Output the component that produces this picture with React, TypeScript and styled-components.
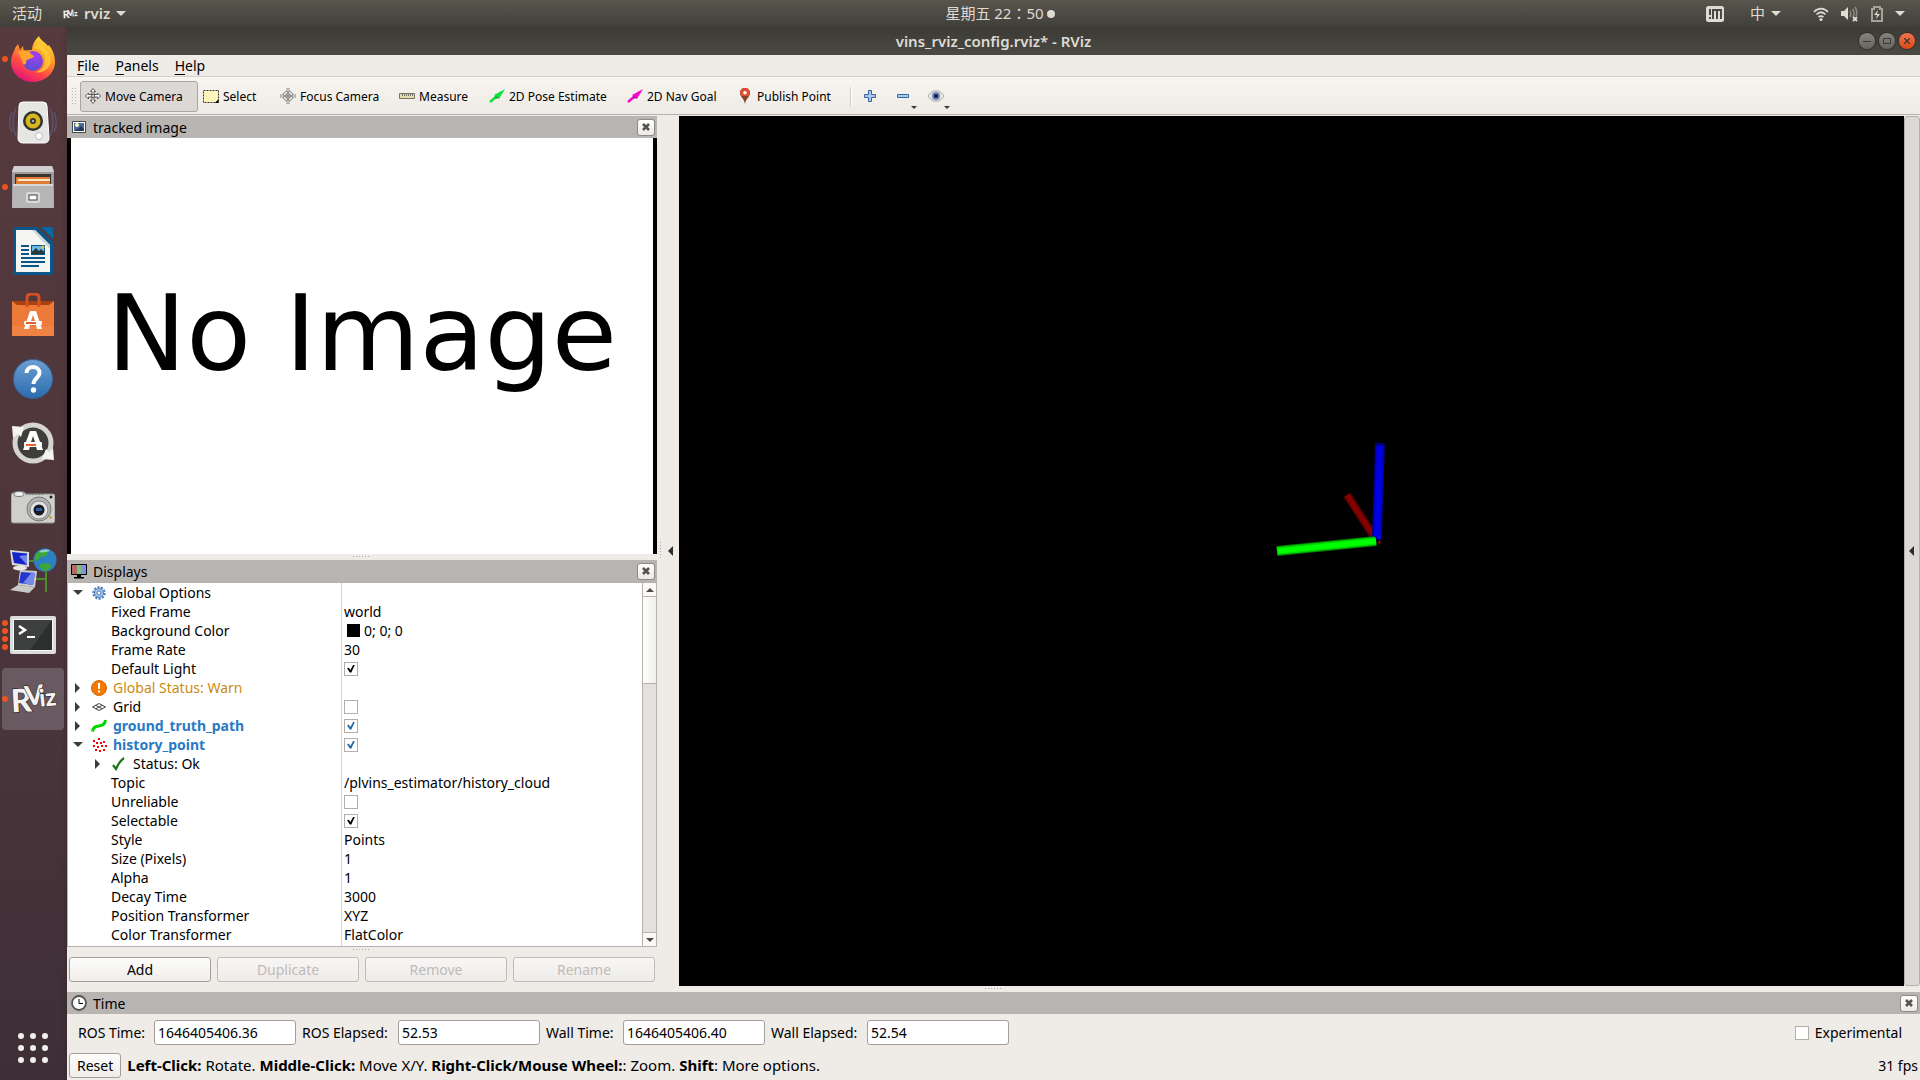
import React from "react";
import styled, { createGlobalStyle, css } from "styled-components";

const GlobalStyle = createGlobalStyle`
  *, *::before, *::after { box-sizing: border-box; }
  html, body, #root { height: 100%; margin: 0; }
  body {
    background: #efebe7;
    color: #000;
    font: 14px/19px "Noto Sans", "Noto Sans CJK SC", sans-serif;
    overflow: hidden;
  }
  button, input { font: inherit; color: inherit; margin: 0; }
  svg { display: block; flex: none; }
`;

/* ---------- desktop shell ---------- */

const Desktop = styled.div`
  display: flex;
  flex-direction: column;
  height: 100vh;
`;

const TopBar = styled.header`
  display: grid;
  grid-template-columns: 1fr auto 1fr;
  flex: none;
  height: 27px;
  align-items: center;
  background: linear-gradient(#58554d, #413f3a);
  color: #dfdbd2;
  font-size: 15px;
`;

const BarGroup = styled.div<{ $end?: boolean }>`
  display: flex;
  align-items: center;
  height: 27px;
  ${(p) =>
    p.$end
      ? css`
          justify-content: flex-end;
          padding-right: 15px;
        `
      : css`
          padding-left: 12px;
          gap: 20px;
        `}
`;

const BarButton = styled.button<{ $bold?: boolean; $after?: number }>`
  display: flex;
  align-items: center;
  gap: 6px;
  padding: 0;
  margin-right: ${(p) => p.$after || 0}px;
  border: 0;
  background: none;
  color: #dfdbd2;
  font-weight: ${(p) => (p.$bold ? 600 : 400)};
`;

const Clock = styled(BarButton)`
  margin-left: 80px;
  gap: 3px;
  font-family: "Noto Sans", "Noto Sans CJK TC", sans-serif;
`;

const Dot = styled.span`
  width: 8px;
  height: 8px;
  border-radius: 50%;
  background: #dfdbd2;
`;

const Below = styled.div`
  display: flex;
  flex: 1;
  min-height: 0;
`;

const Dock = styled.nav`
  display: flex;
  flex-direction: column;
  flex: none;
  width: 67px;
  background: linear-gradient(90deg, transparent 90%, rgba(0, 0, 0, 0.08)),
    linear-gradient(#573a3d, #4d363c 50%, #3e2f37);
`;

const DockItem = styled.button<{ $active?: boolean; $last?: boolean }>`
  position: relative;
  display: grid;
  place-items: center;
  width: 62px;
  height: 62px;
  margin: ${(p) => (p.$last ? "auto 2px 1px" : "1px 2px")};
  padding: 0;
  border: 0;
  border-radius: 4px;
  background: ${(p) => (p.$active ? "#685a60" : "none")};
`;

const Running = styled.span`
  position: absolute;
  left: 0;
  top: 0;
  bottom: 0;
  display: flex;
  flex-direction: column;
  justify-content: center;
  gap: 2px;
  i {
    width: 6px;
    height: 6px;
    border-radius: 50%;
    background: #e95420;
  }
`;

/* ---------- application window ---------- */

const Window = styled.main`
  display: flex;
  flex-direction: column;
  flex: 1;
  min-width: 0;
  background: #efebe7;
`;

const TitleBar = styled.div`
  position: relative;
  display: flex;
  flex: none;
  align-items: center;
  justify-content: center;
  height: 28px;
  background: linear-gradient(#3b3a36, #4b4944);
  color: #dfdbd2;
  font-size: 15px;
  font-weight: 600;
`;

const WindowButtons = styled.div`
  position: absolute;
  right: 5px;
  top: 6px;
  display: flex;
  gap: 4px;
`;

const WindowButton = styled.button<{ $close?: boolean }>`
  display: grid;
  place-items: center;
  width: 16px;
  height: 16px;
  padding: 0;
  border: 0;
  border-radius: 50%;
  color: #3a3935;
  background: ${(p) => (p.$close ? "linear-gradient(#f4764d, #dd4814)" : "linear-gradient(#85837c, #66645e)")};
  box-shadow: 0 0 1px 1px rgba(30, 28, 26, 0.5);
`;

const MenuBar = styled.nav`
  display: flex;
  flex: none;
  height: 22px;
  padding-left: 2px;
  border-bottom: 1px solid #d4d0cb;
`;

const MenuButton = styled.button`
  padding: 0 8px;
  border: 0;
  background: none;
  line-height: 21px;
  u {
    text-underline-offset: 3px;
  }
`;

const Toolbar = styled.div`
  display: flex;
  flex: none;
  align-items: center;
  height: 38px;
  padding: 1px 0 0 4px;
  border-bottom: 1px solid #b6b2ad;
  background: linear-gradient(#f8f5f0, #eeebe6);
`;

const Grip = styled.span`
  width: 5px;
  height: 18px;
  margin-right: 4px;
  background: radial-gradient(circle, #b9b5b0 1px, transparent 1px) 0 0 / 3px 3px;
`;

const ToolButton = styled.button<{ $width: number; $active?: boolean }>`
  display: flex;
  align-items: center;
  gap: 4px;
  width: ${(p) => p.$width}px;
  height: 31px;
  padding: 0 0 0 4px;
  border: 1px solid ${(p) => (p.$active ? "#a9a5a1" : "transparent")};
  border-radius: 3px;
  background: ${(p) => (p.$active ? "#dcd8d5" : "none")};
  font-size: 12px;
  white-space: nowrap;
`;

const Separator = styled.span`
  width: 2px;
  height: 19px;
  margin-right: 8px;
  border-left: 1px solid #ccc8c3;
  border-right: 1px solid #fff;
`;

const IconTool = styled.button`
  position: relative;
  display: grid;
  place-items: center;
  width: 33px;
  height: 31px;
  padding: 0 13px 0 0;
  border: 0;
  background: none;
`;

const DropMark = styled.span`
  position: absolute;
  right: 9px;
  bottom: 3px;
  border: 3px solid transparent;
  border-top-color: #3c3b37;
  border-bottom: 0;
`;

const Workspace = styled.div`
  display: flex;
  flex: 1;
  min-height: 0;
  padding-top: 1px;
`;

const Side = styled.section`
  display: flex;
  flex-direction: column;
  flex: none;
  width: 590px;
`;

const PanelHeader = styled.div`
  display: flex;
  align-items: center;
  flex: none;
  height: 22px;
  padding: 0 2px 0 4px;
  gap: 6px;
  background: #b8b4b1;
  h2 {
    flex: 1;
    margin: 0;
    font-size: 14px;
    font-weight: 400;
  }
`;

const CloseButton = styled.button`
  display: grid;
  place-items: center;
  width: 18px;
  height: 17px;
  padding: 0;
  border: 1px solid #8d8985;
  border-radius: 3px;
  background: linear-gradient(#fff, #eceae7);
`;

const ImagePane = styled.div`
  display: grid;
  place-items: center;
  flex: 1;
  min-height: 0;
  padding-bottom: 24px;
  border: solid #000;
  border-width: 0 4px;
  background: #fff;
  font: 106px/120px "DejaVu Sans", sans-serif;
  white-space: nowrap;
  overflow: hidden;
`;

const Splitter = styled.div<{ $height: number }>`
  flex: none;
  height: ${(p) => p.$height}px;
  &::before {
    content: "";
    display: block;
    width: 18px;
    height: 1px;
    margin: 2px auto 0;
    background: repeating-linear-gradient(90deg, #aaa6a1 0 1px, transparent 1px 3px);
  }
`;

const TreeFrame = styled.div`
  display: flex;
  flex: none;
  height: 365px;
  border: 1px solid #b6b1ac;
`;

const Tree = styled.table`
  flex: 1;
  align-self: flex-start;
  table-layout: fixed;
  border-collapse: separate;
  border-spacing: 0;
`;

const TreeArea = styled.div`
  display: flex;
  flex: 1;
  background: linear-gradient(90deg, #fff 273px, #d5d2cf 273px 274px, #fff 274px);
`;

const NameCell = styled.th`
  width: 273px;
  height: 19px;
  padding: 0;
  font-weight: 400;
  text-align: left;
`;

const ValueCell = styled.td`
  height: 19px;
  padding: 0 0 0 3px;
`;

const Line = styled.div<{ $indent?: number; $tone?: "warn" | "link" }>`
  display: flex;
  align-items: center;
  height: 19px;
  padding-left: ${(p) => p.$indent || 0}px;
  color: ${(p) => (p.$tone === "warn" ? "#c88c14" : p.$tone === "link" ? "#2a79c4" : "#000")};
  font-weight: ${(p) => (p.$tone === "link" ? 700 : 400)};
`;

const Expander = styled.button<{ $open?: boolean }>`
  display: grid;
  place-items: center;
  width: 19px;
  height: 19px;
  padding: 0;
  border: 0;
  background: none;
  &::before {
    content: "";
    border: 5px solid transparent;
    ${(p) =>
      p.$open
        ? css`
            border-top-color: #3c3b37;
            border-bottom: 0;
          `
        : css`
            border-left-color: #3c3b37;
            border-right: 0;
          `}
  }
`;

const IconSlot = styled.span`
  margin: 0 6px 0 4px;
`;

const Check = styled.input.attrs({ type: "checkbox" })<{ $blue?: boolean }>`
  appearance: none;
  display: block;
  flex: none;
  width: 14px;
  height: 14px;
  border: 1px solid #b3aeaa;
  background: #fff;
  &:checked::before {
    content: "";
    display: block;
    width: 8px;
    height: 8px;
    margin: 2px;
    background: ${(p) => (p.$blue ? "#1d63a8" : "#000")};
    clip-path: polygon(0 45%, 22% 40%, 42% 68%, 80% 0, 100% 0, 54% 100%, 34% 100%);
  }
`;

const Swatch = styled.span`
  width: 13px;
  height: 13px;
  margin: 0 4px 0 3px;
  background: #000;
`;

const ScrollBar = styled.div`
  display: flex;
  flex-direction: column;
  width: 14px;
  border-left: 1px solid #b6b1ac;
  background: #e3e1de;
`;

const ScrollStep = styled.button<{ $down?: boolean }>`
  display: grid;
  place-items: center;
  height: 14px;
  padding: 0;
  border: solid #b6b1ac;
  border-width: ${(p) => (p.$down ? "1px 0 0" : "0 0 1px")};
  margin-top: ${(p) => (p.$down ? "auto" : 0)};
  background: #faf9f8;
  &::before {
    content: "";
    border: 4px solid transparent;
    ${(p) => (p.$down ? "border-top-color: #4b4a46; border-bottom: 0;" : "border-bottom-color: #4b4a46; border-top: 0;")}
  }
`;

const Thumb = styled.div`
  height: 87px;
  border-bottom: 1px solid #b6b1ac;
  background: linear-gradient(90deg, #fff, #f1efed);
`;

const ButtonRow = styled.div`
  display: grid;
  grid-template-columns: repeat(4, 1fr);
  gap: 6px;
  padding: 0 2px 4px;
`;

const PushButton = styled.button`
  height: 25px;
  padding: 0 7px;
  border: 1px solid #a39f9b;
  border-radius: 3px;
  background: linear-gradient(#fdfdfc, #efedea);
  line-height: 21px;
  &:disabled {
    border-color: #bfbbb7;
    color: #bfbbb8;
    background: linear-gradient(#f8f7f5, #eeebe8);
  }
`;

const SideHandle = styled.button<{ $wide?: boolean }>`
  display: flex;
  align-items: center;
  flex: none;
  gap: 7px;
  width: ${(p) => (p.$wide ? 22 : 16)}px;
  padding: 0 0 0 ${(p) => (p.$wide ? 3 : 4)}px;
  border: ${(p) => (p.$wide ? 0 : "1px solid #b3afab")};
  border-radius: ${(p) => (p.$wide ? 0 : 3)}px;
  background: ${(p) => (p.$wide ? "none" : "#dcd8d5")};
`;

const VerticalDots = styled.span`
  width: 1px;
  height: 18px;
  background: repeating-linear-gradient(#aaa6a1 0 1px, transparent 1px 3px);
`;

const LeftMark = styled.span`
  border: 5px solid transparent;
  border-right-color: #2f2e2b;
  border-left: 0;
`;

const View = styled.div`
  flex: 1;
  min-width: 0;
  background: #000;
  svg {
    width: 100%;
    height: 100%;
  }
`;

const TimeForm = styled.form`
  display: flex;
  align-items: center;
  flex: none;
  height: 37px;
  padding: 0 18px 0 11px;
`;

const TimeLabel = styled.label<{ $width: number }>`
  width: ${(p) => p.$width}px;
  white-space: nowrap;
`;

const TimeInput = styled.input`
  width: 142px;
  height: 25px;
  margin-right: 6px;
  padding: 0 3px;
  border: 1px solid #a39f9b;
  border-radius: 3px;
  background: #fff;
  line-height: 21px;
`;

const Experimental = styled.label`
  display: flex;
  align-items: center;
  gap: 6px;
  margin-left: auto;
`;

const StatusBar = styled.footer`
  display: flex;
  flex: none;
  align-items: center;
  height: 29px;
  padding: 0 2px;
  gap: 6px;
  p {
    flex: 1;
    margin: 0;
    font-size: 15px;
  }
`;

/* ---------- icons ---------- */

const DownTri = () => (
  <svg width="10" height="5" viewBox="0 0 10 5"><path d="M0 0h10L5 5z" fill="#dfdbd2" /></svg>
);

const RvizMark = ({ small }: { small?: boolean }) => (
  <svg width={small ? 16 : 50} height={small ? 16 : 50} viewBox="-1 -8 50 50" overflow="visible" fontFamily="Lato, sans-serif" fontWeight="900" fill="#f4f3f1">
    <g stroke={small ? "none" : "#2b2426"} strokeWidth="1.200" paintOrder="stroke">
      <text x="2" y="30" fontSize="32" transform="rotate(-3 10 20)">R</text>
      <text x="16" y="23" fontSize="27" transform="rotate(-6 24 16)">V</text>
      <text x="30" y="24" fontSize="24" transform="rotate(-6 38 16)">iz</text>
    </g>
  </svg>
);

const FirefoxIcon = () => (
  <svg width="46" height="48" viewBox="0 0 46 48">
    <defs>
      <linearGradient id="ff1" x1=".8" y1="0" x2=".3" y2="1">
        <stop offset="0" stopColor="#ffe73a" /><stop offset=".4" stopColor="#ff9a26" /><stop offset=".7" stopColor="#ff4a45" /><stop offset="1" stopColor="#e3107c" />
      </linearGradient>
      <radialGradient id="ff2" cx=".6" cy=".2" r=".8"><stop offset="0" stopColor="#a43df0" /><stop offset="1" stopColor="#5b4fd0" /></radialGradient>
    </defs>
    <path d="M8 9l2 6 3-4 1 6c3-2 5-2 8-2C22 8 27 3 29 1c1 4 6 6 9 10l1-1c4 5 6 11 6 17 0 11-10 20-22 20S1 38 1 27C1 20 5 15 5 13z" fill="url(#ff1)" />
    <circle cx="23" cy="26" r="10" fill="url(#ff2)" />
    <path d="M8 17c5-3 11-2 13 2l3 2c-1 3-6 2-8 5 1 3-1 4-3 3-1-5-3-8-5-12z" fill="#ffa52c" />
    <path d="M24 14c6-1 11 4 11 11 0 6-4 11-10 12 8 2 15-4 16-11 0-8-7-13-12-18-2 2-4 4-5 6z" fill="#ffd034" opacity=".8" />
  </svg>
);

const SpeakerIcon = () => (
  <svg width="50" height="46" viewBox="0 0 50 46">
    <g fill="none" stroke="#5d6f9e" strokeWidth="1.500" opacity=".5">
      <path d="M8 8c-4 9-4 20 0 28M4 12c-3 7-3 14 0 20M42 8c4 9 4 20 0 28M46 12c3 7 3 14 0 20" />
    </g>
    <path d="M15 2h20q4 0 4 4l2 32q0 5-5 5H15q-5 0-5-5l1-32q0-4 4-4z" fill="#e6e6e4" stroke="#fff" />
    <circle cx="25" cy="21" r="10" fill="#33332c" /><circle cx="25" cy="21" r="7.500" fill="#d6b720" /><circle cx="25" cy="21" r="3" fill="#33332c" /><circle cx="25" cy="21" r="1.300" fill="#aaa" />
    <circle cx="31" cy="36" r="3.500" fill="#fff" stroke="#bbb" />
  </svg>
);

const FilesIcon = () => (
  <svg width="44" height="46" viewBox="0 0 44 46">
    <path d="M3 2h38l2 5v35H1V7z" fill="#9c9c9c" /><path d="M3 2h38l2 6H1z" fill="#cfcfcf" />
    <path d="M4 10h36v10H4z" fill="#3a322c" /><path d="M5 13h34v8H5z" fill="#e07b33" /><path d="M7 15h32v2H7z" fill="#fde7c6" />
    <path d="M2 20h40l1 24H1z" fill="#b6b6b6" /><path d="M2 20h40v2H2z" fill="#d8d8d8" />
    <rect x="15" y="28" width="14" height="11" rx="2" fill="#d9d9d9" /><rect x="18" y="31" width="8" height="5" fill="#fff" stroke="#444" />
  </svg>
);

const WriterIcon = () => (
  <svg width="40" height="48" viewBox="0 0 40 48">
    <path d="M2 0h22l16 15v31q0 2-2 2H2q-2 0-2-2V2q0-2 2-2z" fill="#0b5688" /><path d="M28 0h10q2 0 2 2v10z" fill="#0369a3" />
    <path d="M3 3h19l15 15v27H3z" fill="#f5f5f4" /><path d="M22 3l15 15V22L19 3z" fill="#cfd4d6" />
    <g fill="#0b5688"><path d="M8 18h8v2H8zM8 22h8v2H8zM8 26h8v2H8zM8 30h24v2H8zM8 34h24v2H8zM8 38h18v2H8z" /><path d="M18 18h14v10H18z" /></g>
    <path d="M19 19h12v5H19z" fill="#6db9e2" /><path d="M19 27v-2l4-4 3 3 2-2 3 3v2z" fill="#263a3a" /><circle cx="30" cy="20" r="1.500" fill="#f4ca38" />
  </svg>
);

const SoftwareIcon = () => (
  <svg width="42" height="44" viewBox="0 0 42 44">
    <path d="M0 8h42l-2 5H2z" fill="#a8410f" /><path d="M0 8l5 4h32l5-4v35H0z" fill="#ee7a3a" /><path d="M0 33h42v10H0z" fill="#f08344" />
    <path d="M15 14V5q0-4 4-4h4q4 0 4 4v9" fill="none" stroke="#d5501d" strokeWidth="3" />
    <path d="M18 18h6l6 18h-5l-1-4h-6l-1 4h-5zM21 22l-2 6h4z" fill="#fff" fillRule="evenodd" /><rect x="12" y="28" width="18" height="4" rx="1" fill="#fff" /><path d="M14 29h10v2H14z" fill="#e9602a" />
  </svg>
);

const HelpIcon = () => (
  <svg width="40" height="42" viewBox="0 0 40 42">
    <defs><linearGradient id="hp" x2="0" y2="1"><stop stopColor="#6d9fd3" /><stop offset="1" stopColor="#2a6cae" /></linearGradient></defs>
    <circle cx="20" cy="21" r="19.500" fill="url(#hp)" stroke="#31639b" />
    <path d="M13.500 15c0-8 13-8 13 0 0 5-6 5-6 11" fill="none" stroke="#fff" strokeWidth="4" /><circle cx="20.500" cy="32" r="2.700" fill="#fff" />
  </svg>
);

const UpdaterIcon = () => (
  <svg width="44" height="44" viewBox="0 0 44 44">
    <circle cx="22" cy="22" r="18" fill="#3f3e3a" stroke="#d6d4d2" strokeWidth="5" />
    <path d="M1 5l12 1-3 10-3-3-5 4zM43 39l-12-1 4-10 3 3 4-4z" fill="#f4f4f4" />
    <path d="M19 10h6l7 19h-6l-1-4h-6l-1 4h-6zM22 15l-2 6h4z" fill="#fff" fillRule="evenodd" /><rect x="13" y="21" width="18" height="5" rx="1" fill="#fff" /><path d="M15 23h10v2H15z" fill="#e9602a" />
  </svg>
);

const CameraIcon = () => (
  <svg width="44" height="34" viewBox="0 0 44 34">
    <path d="M5 2h8l2 2h27q2 0 2 2v24q0 3-2 3H2q-2 0-2-3V5q0-2 5-3z" fill="#cfcfcd" stroke="#8e8e8c" />
    <ellipse cx="8" cy="4" rx="5" ry="2.500" fill="#eee" stroke="#777" /><path d="M15 4h18" stroke="#666" strokeDasharray="2 1" />
    <circle cx="28" cy="19" r="12" fill="#b3b3b1" stroke="#777" /><circle cx="28" cy="20" r="9" fill="#e3e3e3" stroke="#888" /><circle cx="28" cy="20" r="5.500" fill="#161a22" /><path d="M25 18h6v3h-6z" fill="#2c5ea8" />
    <circle cx="40" cy="7" r="1.500" fill="#222" /><path d="M38 26h3v3h-3z" fill="#e9a13a" />
  </svg>
);

const NetworkIcon = () => (
  <svg width="48" height="46" viewBox="0 0 48 46">
    <path d="M19 13h8M37 24v20M26 31h11" stroke="#4caa26" strokeWidth="1.500" fill="none" />
    <path d="M1 2l19 2v15L3 17z" fill="#d9d9d6" /><path d="M3 4l15 1.500V17L5 15z" fill="#1424c8" /><path d="M10 8l8-1v10z" fill="#7486ea" />
    <ellipse cx="11" cy="20" rx="7" ry="2.500" fill="#e8e8e5" />
    <path d="M11 22l17 1-2 16-17-2z" fill="#d0d0cd" /><path d="M12 24l14 1-2 12-14-2z" fill="#2236d0" /><path d="M14 35l9-11 3 1-2 12z" fill="#7689ea" /><path d="M1 42l8-5 17 2-6 6z" fill="#c9c9c6" />
    <circle cx="36" cy="12" r="11.500" fill="#2d7fc4" /><path d="M28 5c4-4 9-4 12-2l-3 5-5 1-4 4-3-2zM31 16l8-1 4 3-5 5c-4 1-8-3-7-7z" fill="#3fa63c" /><path d="M30 4c4-3 8-3 11-1-4 1-7 2-11 1z" fill="#bfe3f6" opacity=".7" />
  </svg>
);

const TerminalIcon = () => (
  <svg width="46" height="38" viewBox="0 0 46 38">
    <rect width="46" height="38" rx="2" fill="#dcdcda" /><rect x="3" y="3" width="40" height="32" fill="#f8f8f8" /><rect x="4" y="4" width="38" height="30" fill="#2d2f2e" />
    <path d="M4 4h38L20 34H4z" fill="#3e403f" /><path d="M9 10l6 4-6 4" fill="none" stroke="#fff" strokeWidth="2.500" /><path d="M17 21h8" stroke="#fff" strokeWidth="2" />
  </svg>
);

const AppsIcon = () => (
  <svg width="32" height="32" viewBox="0 0 32 32" fill="#f2f0ef">
    {[4, 16, 28].flatMap((y) => [4, 16, 28].map((x) => <circle key={`${x}-${y}`} cx={x} cy={y} r="3" />))}
  </svg>
);

const MoveIcon = () => (
  <svg width="16" height="16" viewBox="0 0 16 16" fill="#fafafa" stroke="#555">
    <path d="M8 .5l2.500 3H9v3h3.500V5l3 3-3 3V9H9v3.500h1.500l-2.500 3-2.500-3H7V9H3.500v2l-3-3 3-3v1.500H7v-3H5.500z" /><circle cx="8" cy="8" r="1.500" />
  </svg>
);
const SelectIcon = () => (
  <svg width="16" height="16" viewBox="0 0 16 16"><path d="M.5 2.500h15v12H.5z" fill="#fff5ba" stroke="#333" strokeDasharray="2 1" /><path d="M15.500 11v4H12z" fill="#000" /></svg>
);
const FocusIcon = () => (
  <svg width="16" height="16" viewBox="0 0 16 16" fill="none" stroke="#777"><circle cx="8" cy="8" r="5" /><circle cx="8" cy="8" r="2.500" /><path d="M8 0v16M0 8h16" /><path d="M7 0h2v4H7zM7 12h2v4H7zM0 7h4v2H0zM12 7h4v2h-4z" strokeWidth=".7" fill="#eee" /></svg>
);
const MeasureIcon = () => (
  <svg width="16" height="16" viewBox="0 0 16 16"><path d="M.5 5.500h15v5H.5z" fill="#e5dcae" stroke="#77736a" /><path d="M3.500 6v2M5.500 6v2M7.500 6v2M9.500 6v2M11.500 6v2M13.500 6v2" stroke="#77736a" /></svg>
);
const ArrowIcon = ({ color }: { color: string }) => (
  <svg width="16" height="16" viewBox="0 0 16 16"><path d="M1 14l7-6" stroke={color} strokeWidth="2.500" /><path d="M5 7L16 1l-6 10z" fill={color} /><path d="M6 8l4 2-3 1z" fill="#000" opacity=".4" /></svg>
);
const PinIcon = () => (
  <svg width="16" height="16" viewBox="0 0 16 16"><path d="M8 0c3 0 5 2 5 5 0 4-4 5-5 11C7 10 3 9 3 5c0-3 2-5 5-5z" fill="#8a4129" /><path d="M8 0c3 0 5 2 5 5l-1 3H4L3 5c0-3 2-5 5-5z" fill="#dc4f30" /><circle cx="8" cy="4.800" r="1.800" fill="#fff" /></svg>
);
const PlusIcon = () => (
  <svg width="12" height="12" viewBox="0 0 12 12"><path d="M4.500.5h3v4h4v3h-4v4h-3v-4h-4v-3h4z" fill="#a9c8ea" stroke="#3465a4" /></svg>
);
const MinusIcon = () => (
  <svg width="12" height="12" viewBox="0 0 12 12"><path d="M.5 4.500h11v3H.5z" fill="#a9c8ea" stroke="#3465a4" /></svg>
);
const EyeIcon = () => (
  <svg width="16" height="12" viewBox="0 0 16 12"><path d="M0 6c4-7 12-7 16 0-4 7-12 7-16 0z" fill="#e9e7e5" stroke="#999" strokeWidth=".8" /><circle cx="8" cy="6" r="4" fill="#6f82bd" /><circle cx="8" cy="6" r="2" fill="#14193a" /></svg>
);
const CrossIcon = () => (
  <svg width="8" height="8" viewBox="0 0 8 8"><path d="M1 1l6 6M7 1L1 7" stroke="#55534f" strokeWidth="2.600" /></svg>
);
const PictureIcon = () => (
  <svg width="16" height="16" viewBox="0 0 16 16"><path d="M1.500 2.500h13v11h-13z" fill="#fff" stroke="#444" /><path d="M3 4h10v8H3z" fill="#4a6a9c" /><circle cx="6" cy="6" r="2" fill="#fff6c2" /><path d="M3 12l5-3 2-2 3 3v2z" fill="#26395c" /></svg>
);
const DisplayIcon = () => (
  <svg width="16" height="16" viewBox="0 0 16 16"><path d="M.5 1.500h15v10H.5z" fill="#000" stroke="#000" /><path d="M1 2h5v9H1z" fill="#b56868" /><path d="M6 2h4v9H6z" fill="#79c479" /><path d="M10 2h5v9h-5z" fill="#8f8fe0" /><path d="M6 12h4v2h3v1.500H3V14h3z" fill="#000" /></svg>
);
const ClockIcon = () => (
  <svg width="16" height="16" viewBox="0 0 16 16" fill="none"><circle cx="8" cy="8" r="7" fill="#fff" stroke="#555" strokeWidth="1.800" /><path d="M8 4v4.500h4" stroke="#000" /></svg>
);
const GearIcon = () => (
  <svg width="16" height="16" viewBox="0 0 16 16" fill="none"><circle cx="8" cy="8" r="5.700" stroke="#4c7fbe" strokeWidth="2" strokeDasharray="2.200 1.300" /><circle cx="8" cy="8" r="4.500" fill="#a9c6e8" stroke="#4c7fbe" /><circle cx="8" cy="8" r="2" fill="#fff" stroke="#4c7fbe" /></svg>
);
const WarnIcon = () => (
  <svg width="16" height="16" viewBox="0 0 16 16"><circle cx="8" cy="8" r="7.500" fill="#f57900" stroke="#ce6a12" /><path d="M7 3h2v6H7zM7 10.500h2v2H7z" fill="#fff" /></svg>
);
const GridIcon = () => (
  <svg width="16" height="16" viewBox="0 0 16 16" fill="none" stroke="#444"><path d="M1.500 8L8 4.500 14.500 8 8 11.500zM4.700 6.300l6.500 3.500M11.300 6.300L4.700 9.800" /></svg>
);
const PathIcon = () => (
  <svg width="16" height="16" viewBox="0 0 16 16"><path d="M1.500 13.500C3 4 13 12 14.500 2" fill="none" stroke="#00d800" strokeWidth="3" /></svg>
);
const PointsIcon = () => (
  <svg width="16" height="16" viewBox="0 0 16 16" fill="#f00"><path d="M2 3h2v2H2zM7 1h2v2H7zM12 4h2v2h-2zM5 5h2v2H5zM9 5h2v2H9zM2 8h2v2H2zM6 9h2v2H6zM10 8h2v2h-2zM14 8h2v2h-2zM4 12h2v2H4zM8 13h2v2H8zM12 12h2v2h-2z" /></svg>
);
const OkIcon = () => (
  <svg width="16" height="16" viewBox="0 0 16 16"><path d="M2 9l3 4C7 8 9 5 13 2" fill="none" stroke="#1a7a1a" strokeWidth="2.200" /></svg>
);

/* ---------- data ---------- */

const dockItems: { name: string; icon: React.ReactNode; dots?: number; active?: boolean }[] = [
  { name: "Firefox", icon: <FirefoxIcon />, dots: 1 },
  { name: "Rhythmbox", icon: <SpeakerIcon /> },
  { name: "Files", icon: <FilesIcon />, dots: 1 },
  { name: "LibreOffice Writer", icon: <WriterIcon /> },
  { name: "Ubuntu Software", icon: <SoftwareIcon /> },
  { name: "Help", icon: <HelpIcon /> },
  { name: "Software Updater", icon: <UpdaterIcon /> },
  { name: "Shotwell", icon: <CameraIcon /> },
  { name: "Network", icon: <NetworkIcon /> },
  { name: "Terminal", icon: <TerminalIcon />, dots: 4 },
  { name: "RViz", icon: <RvizMark />, dots: 1, active: true },
];

const tools = [
  { label: "Move Camera", icon: <MoveIcon />, width: 118 },
  { label: "Select", icon: <SelectIcon />, width: 77 },
  { label: "Focus Camera", icon: <FocusIcon />, width: 119 },
  { label: "Measure", icon: <MeasureIcon />, width: 90 },
  { label: "2D Pose Estimate", icon: <ArrowIcon color="#12e33c" />, width: 138 },
  { label: "2D Nav Goal", icon: <ArrowIcon color="#f40bd0" />, width: 110 },
  { label: "Publish Point", icon: <PinIcon />, width: 118 },
];

type Row = {
  name: string;
  value?: string;
  check?: boolean;
  icon?: React.ReactNode;
  open?: boolean;
  child?: boolean;
  tone?: "warn" | "link";
  swatch?: boolean;
};

const rows: Row[] = [
  { name: "Global Options", icon: <GearIcon />, open: true },
  { name: "Fixed Frame", value: "world" },
  { name: "Background Color", value: "0; 0; 0", swatch: true },
  { name: "Frame Rate", value: "30" },
  { name: "Default Light", check: true },
  { name: "Global Status: Warn", icon: <WarnIcon />, tone: "warn" },
  { name: "Grid", icon: <GridIcon />, check: false },
  { name: "ground_truth_path", icon: <PathIcon />, tone: "link", check: true },
  { name: "history_point", icon: <PointsIcon />, tone: "link", check: true, open: true },
  { name: "Status: Ok", icon: <OkIcon />, child: true },
  { name: "Topic", value: "/plvins_estimator/history_cloud" },
  { name: "Unreliable", check: false },
  { name: "Selectable", check: true },
  { name: "Style", value: "Points" },
  { name: "Size (Pixels)", value: "1" },
  { name: "Alpha", value: "1" },
  { name: "Decay Time", value: "3000" },
  { name: "Position Transformer", value: "XYZ" },
  { name: "Color Transformer", value: "FlatColor" },
];

const times = [
  { id: "ros-time", label: "ROS Time:", value: "1646405406.36", width: 76 },
  { id: "ros-elapsed", label: "ROS Elapsed:", value: "52.53", width: 96 },
  { id: "wall-time", label: "Wall Time:", value: "1646405406.40", width: 77 },
  { id: "wall-elapsed", label: "Wall Elapsed:", value: "52.54", width: 96 },
];

/* ---------- parts ---------- */

const Panel = ({ title, icon }: { title: string; icon: React.ReactNode }) => (
  <PanelHeader>
    {icon}
    <h2>{title}</h2>
    <CloseButton aria-label={`Close ${title}`}><CrossIcon /></CloseButton>
  </PanelHeader>
);

const TreeRow = ({ row }: { row: Row }) => (
  <tr>
    <NameCell scope="row">
      <Line $tone={row.tone} $indent={row.icon ? (row.child ? 20 : 0) : 43}>
        {row.icon && <Expander $open={row.open} aria-label={`Toggle ${row.name}`} />}
        {row.icon && <IconSlot>{row.icon}</IconSlot>}
        {row.name}
      </Line>
    </NameCell>
    <ValueCell>
      <Line>
        {row.swatch && <Swatch />}
        {row.value}
        {row.check !== undefined && <Check aria-label={row.name} defaultChecked={row.check} $blue={row.tone === "link"} />}
      </Line>
    </ValueCell>
  </tr>
);

const Axes = () => (
  <svg viewBox="679 116 1225 870" aria-label="World axes">
    <path d="M1347 495l26 40" stroke="#5c0000" strokeWidth="8" />
    <path d="M1347 495l26 40" stroke="#850000" strokeWidth="5" />
    <path d="M1277 551l99-10" stroke="#007a00" strokeWidth="10" />
    <path d="M1277 551l99-10" stroke="#00d400" strokeWidth="8" />
    <path d="M1278 551l98-10" stroke="#00ff00" strokeWidth="5" />
    <path d="M1380 443l-3 93" stroke="#00007c" strokeWidth="10" />
    <path d="M1380 446l-3 90" stroke="#0000c0" strokeWidth="8" />
    <path d="M1380 446l-3 90" stroke="#0000e6" strokeWidth="5" />
    <path d="M1372 535l8 6 2-6z" fill="#0000e0" />
    <path d="M1378 542l3-1-2 3z" fill="#f00" />
  </svg>
);

export default function App() {
  return (
    <Desktop>
      <GlobalStyle />
      <TopBar>
        <BarGroup>
          <BarButton>活动</BarButton>
          <BarButton $bold>
            <RvizMark small />
            rviz
            <DownTri />
          </BarButton>
        </BarGroup>
        <Clock>
          星期五 22：50
          <Dot />
        </Clock>
        <BarGroup $end>
          <BarButton $after={26} aria-label="Input method">
            <svg width="18" height="16" viewBox="0 0 18 16"><rect width="18" height="16" rx="2.500" fill="#dfdbd2" /><path d="M4 3v6M4 11v2M7 13V4h8v9M11 4v9" stroke="#4b4943" strokeWidth="2" fill="none" /></svg>
          </BarButton>
          <BarButton $after={32}>中<DownTri /></BarButton>
          <BarButton $after={12} aria-label="Wi-Fi">
            <svg width="16" height="16" viewBox="0 0 16 16" fill="none" stroke="#dfdbd2" strokeWidth="1.700"><path d="M1 6c4-4.500 10-4.500 14 0M3.500 8.500c3-3 6-3 9 0M5.500 11c2-1.500 3-1.500 5 0" /><circle cx="8" cy="13.500" r="1.500" fill="#dfdbd2" stroke="none" /></svg>
          </BarButton>
          <BarButton $after={13} aria-label="Volume">
            <svg width="17" height="16" viewBox="0 0 17 16"><path d="M0 5h3l4-4v13l-4-4H0z" fill="#dfdbd2" /><path d="M9 5q1.500 3 0 6M11.500 3q3 4 .5 8M14 1q3 5 1 9" stroke="#8d8a82" strokeWidth="1.500" fill="none" /><path d="M12 11l4 4M16 11l-4 4" stroke="#dfdbd2" strokeWidth="1.800" /></svg>
          </BarButton>
          <BarButton $after={12} aria-label="Battery">
            <svg width="12" height="16" viewBox="0 0 12 16"><path d="M1 3h2V1h6v2h2v12H1z" fill="none" stroke="#a5a29a" strokeWidth="2" /><path d="M7 4L3 9h3l-1 4 4-5H6z" fill="#dfdbd2" /></svg>
          </BarButton>
          <BarButton aria-label="System menu"><DownTri /></BarButton>
        </BarGroup>
      </TopBar>
      <Below>
        <Dock>
          {dockItems.map((d) => (
            <DockItem key={d.name} aria-label={d.name} $active={d.active}>
              {d.dots && <Running>{Array.from({ length: d.dots }, (_, i) => <i key={i} />)}</Running>}
              {d.icon}
            </DockItem>
          ))}
          <DockItem $last aria-label="Show applications"><AppsIcon /></DockItem>
        </Dock>
        <Window>
          <TitleBar>
            vins_rviz_config.rviz* - RViz
            <WindowButtons>
              <WindowButton aria-label="Minimize"><svg width="8" height="8" viewBox="0 0 8 8"><path d="M0 4.500h8" stroke="currentColor" /></svg></WindowButton>
              <WindowButton aria-label="Maximize"><svg width="8" height="8" viewBox="0 0 8 8"><path d="M.5 1.500h7v5h-7z" fill="none" stroke="currentColor" /></svg></WindowButton>
              <WindowButton $close aria-label="Close"><svg width="6" height="6" viewBox="0 0 6 6"><path d="M0 0l6 6M6 0L0 6" stroke="currentColor" strokeWidth="1.300" /></svg></WindowButton>
            </WindowButtons>
          </TitleBar>
          <MenuBar>
            <MenuButton><u>F</u>ile</MenuButton>
            <MenuButton><u>P</u>anels</MenuButton>
            <MenuButton><u>H</u>elp</MenuButton>
          </MenuBar>
          <Toolbar>
            <Grip />
            {tools.map((t, i) => (
              <ToolButton key={t.label} $width={t.width} $active={i === 0}>{t.icon}{t.label}</ToolButton>
            ))}
            <Separator />
            <IconTool aria-label="Add tool"><PlusIcon /></IconTool>
            <IconTool aria-label="Remove tool"><MinusIcon /><DropMark /></IconTool>
            <IconTool aria-label="Tool visibility"><EyeIcon /><DropMark /></IconTool>
          </Toolbar>
          <Workspace>
            <Side>
              <Panel title="tracked image" icon={<PictureIcon />} />
              <ImagePane>No Image</ImagePane>
              <Splitter $height={6} />
              <Panel title="Displays" icon={<DisplayIcon />} />
              <TreeFrame>
                <TreeArea>
                  <Tree>
                    <tbody>{rows.map((r) => <TreeRow key={r.name} row={r} />)}</tbody>
                  </Tree>
                </TreeArea>
                <ScrollBar>
                  <ScrollStep aria-label="Scroll up" />
                  <Thumb />
                  <ScrollStep $down aria-label="Scroll down" />
                </ScrollBar>
              </TreeFrame>
              <Splitter $height={10} />
              <ButtonRow>
                <PushButton>Add</PushButton>
                <PushButton disabled>Duplicate</PushButton>
                <PushButton disabled>Remove</PushButton>
                <PushButton disabled>Rename</PushButton>
              </ButtonRow>
            </Side>
            <SideHandle $wide aria-label="Hide left panels"><VerticalDots /><LeftMark /></SideHandle>
            <View><Axes /></View>
            <SideHandle aria-label="Show right panels"><LeftMark /></SideHandle>
          </Workspace>
          <Splitter $height={6} />
          <Panel title="Time" icon={<ClockIcon />} />
          <TimeForm>
            {times.map((t) => (
              <React.Fragment key={t.id}>
                <TimeLabel htmlFor={t.id} $width={t.width}>{t.label}</TimeLabel>
                <TimeInput id={t.id} defaultValue={t.value} />
              </React.Fragment>
            ))}
            <Experimental><Check />Experimental</Experimental>
          </TimeForm>
          <StatusBar>
            <PushButton>Reset</PushButton>
            <p>
              <b>Left-Click:</b> Rotate. <b>Middle-Click:</b> Move X/Y. <b>Right-Click/Mouse Wheel:</b>: Zoom. <b>Shift</b>: More options.
            </p>
            <span>31 fps</span>
          </StatusBar>
        </Window>
      </Below>
    </Desktop>
  );
}
